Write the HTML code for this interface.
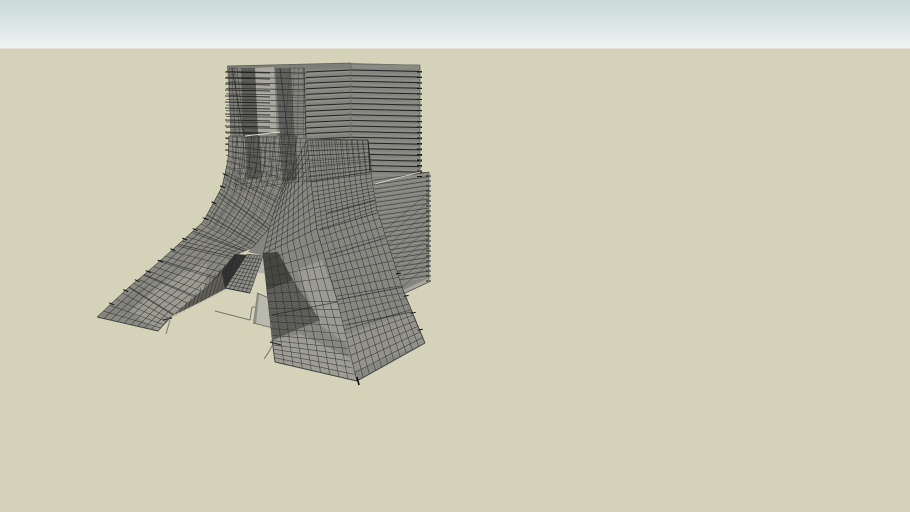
<!DOCTYPE html>
<html lang="en">
<head>
<meta charset="utf-8">
<title>3D model</title>
<style>
html,body{margin:0;padding:0;width:910px;height:512px;overflow:hidden;background:#d4d2b9}
svg{display:block;position:absolute;left:0;top:0}
</style>
</head>
<body>
<svg id="s" width="910" height="512" viewBox="0 0 910 512" xmlns="http://www.w3.org/2000/svg">
<defs>
<linearGradient id="sky" x1="0" y1="0" x2="0" y2="1">
<stop offset="0" stop-color="#cbdbdb"/>
<stop offset=".45" stop-color="#d8e3e2"/>
<stop offset="1" stop-color="#f0f4f4"/>
</linearGradient>
<filter id="b" x="-5%" y="-5%" width="110%" height="110%"><feGaussianBlur stdDeviation="0.35"/></filter>
</defs>
<rect width="910" height="48" fill="url(#sky)"/>
<rect y="48" width="910" height="1.5" fill="#e2e0d0"/>
<rect y="49" width="910" height="463" fill="#d4d2b9"/>
<g id="m" filter="url(#b)"></g>
</svg>
<script>
var m=document.getElementById('m'),NS='http://www.w3.org/2000/svg';
function el(n,a){var e=document.createElementNS(NS,n);for(var k in a)e.setAttribute(k,a[k]);m.appendChild(e);return e}
function poly(p,f,o){el('polygon',{points:p.map(function(q){return q.join(',')}).join(' '),fill:f,'fill-opacity':o==null?1:o})}
function line(a,b,c,w,o){el('line',{x1:a[0],y1:a[1],x2:b[0],y2:b[1],stroke:c||'#333',"stroke-width":w||.7,"stroke-opacity":o==null?1:o})}
function at(r,t){var n=r.length-1,x=Math.min(t*n,n-.0001),i=Math.floor(x),f=x-i;return[r[i][0]+(r[i+1][0]-r[i][0])*f,r[i][1]+(r[i+1][1]-r[i][1])*f]}
function mix(a,b,t){return[a[0]+(b[0]-a[0])*t,a[1]+(b[1]-a[1])*t]}
function surf(L,R,nAlong,nAcross,c,w,o){
 var i,j,S=40,p;
 for(i=0;i<=nAlong;i++){line(at(L,i/nAlong),at(R,i/nAlong),c,w,o)}
 for(j=0;j<=nAcross;j++){p=[];for(i=0;i<=S;i++){var q=mix(at(L,i/S),at(R,i/S),j/nAcross);p.push(q.join(','))}
  el('polyline',{points:p.join(' '),fill:'none',stroke:c,"stroke-width":w,"stroke-opacity":o})}
}
function fillSurf(L,R,f,o){poly(L.concat(R.slice().reverse()),f,o)}

/* ground bits */
line([215,311],[250,320],'#77776a',1);
line([250,320],[252,307],'#77776a',1);
line([252,307],[258,307],'#77776a',1);
poly([[257,293],[253,323],[273,328],[274,300]],'#b9b9ae');
poly([[257,293],[253,323],[256,324],[259,294]],'#8f8f86');
line([257,293],[274,300],'#666',.7);
line([253,323],[273,328],'#666',.7);
poly([[403,288],[429,276],[428,282],[403,294]],'#a6a69c');
line([403,294],[429,282],'#55554e',.8);

/* back tower */
poly([[227,66],[351,63],[420,65],[420,172],[429,172],[429,278],[403,290],[360,240],[300,140],[232,150]],'#85857f');
poly([[227,66],[351,63],[351,68],[227,71]],'#7e7e78');
poly([[351,63],[420,65],[420,69],[351,68]],'#8b8b85');
poly([[255,68],[274,67],[277,136],[258,139]],'#a9a9a1');
poly([[241,68],[255,68],[260,178],[245,180]],'#5b5b57');
poly([[275,68],[291,68],[297,180],[283,182]],'#5f5f5b');

var i,y,t,a;
/* tower stripes */
for(i=0;i<19;i++){y=72+i*5.6;
 line([307,y+2],[352,y-1],'#a6a69e',1.4,.35);
 line([352,y+2],[420,y+3],'#a6a69e',1.4,.3);
 line([226,y-.5],[306,y+1],'#222',.8,.75);
 line([306,y],[352,y-2],'#111',1,.85);
 line([352,y-2],[422,y-.5],'#111',1,.85);
}
for(i=0;i<24;i++){y=176+i*4.5;
 line([362,y+6],[429,y-4],'#2f2f2c',.8,.7);
 line([362,y+8],[429,y-2],'#aaa9a1',.9,.35);
}
for(i=0;i<9;i++){y=200+i*9;line([385,y+30],[429,y-8],'#3a3a36',.6,.55)}
for(i=0;i<20;i++){line([422,72+i*5.5],[417,72+i*5.5],'#111',1)}
for(i=0;i<22;i++){line([426,176+i*5],[431,176+i*5],'#111',.9)}
line([375,184],[420,172],'#d8d8cc',.9);
line([351,63],[351,170],'#6c6c66',.7);
line([420,65],[420,172],'#5d5d57',.8);
line([429,172],[429,282],'#5d5d57',.8);
line([227,66],[351,63],'#5f5f5a',.8);
line([351,64],[420,65],'#6a6a64',.7);
surf([[229,68],[231,150]],[[237,68],[246,150]],12,3,'#333',.6,.65);
surf([[290,68],[283,150]],[[303,68],[304,150]],14,3,'#3a3a38',.6,.55);
for(i=0;i<14;i++){y=72+i*6;line([225,y],[270,y+1],'#111',.9,.8)}
line([232,68],[244,136],'#333',.8);
line([280,68],[288,136],'#333',.8);
line([304,68],[306,140],'#333',.8);

/* closing backdrop behind the legs */
poly([[229,136],[368,140],[377,210],[403,290],[357,300],[264,256],[248,252],[272,225]],'#858580');

/* left leg */
var LL=[[229,136],[228,160],[222,187],[203,222],[180,243],[152,268],[128,288],[97,317]],
    LR=[[297,136],[292,180],[272,225],[252,248],[235,255],[207,287],[172,316],[158,331]];
fillSurf(LL,LR,'#888882',.98);
poly([[130,312],[165,282],[207,262],[205,288],[172,316],[158,331]],'#a2a299',.7);
poly([[97,317],[150,282],[128,312]],'#80807a',.6);
surf(LL,LR,34,9,'#2c2c2a',.6,.75);
surf(LL.slice(0,4),LR.slice(0,4),14,16,'#2c2c2a',.5,.5);
for(i=0;i<8;i++){t=.22+i*.09;line(at(LL,t),at(LR,t),'#1a1a18',1,.5)}

/* central strip */
poly([[262,256],[267,256],[266,274],[255,272]],'#b3b3a8');
var CL=[[247,254],[225,288]],CR=[[263,256],[250,293]];
fillSurf(CL,CR,'#8d8d87');
surf(CL,CR,10,6,'#2c2c2a',.6,.8);
line([225,288],[250,293],'#333',1);

/* dark inner leg panel */
poly([[172,317],[207,287],[235,254],[247,255],[225,289]],'#46463f');
poly([[172,317],[207,287],[222,272],[225,289]],'#5e5e58');
poly([[222,272],[235,254],[247,255],[225,289]],'#333331');
for(i=0;i<14;i++){t=i/13;line(mix([172,317],[235,254],t),mix([172,318],[225,289],t),'#1d1d1b',.5,.7)}
line([171,317],[226,290],'#c8c7b0',.8);
line([163,320],[172,318],'#333',1.2);
el('path',{d:'M170 320 Q168 327 166 334',fill:'none',stroke:'#77776c','stroke-width':1});

/* right leg, left face */
var AL=[[283,186],[270,225],[263,255],[268,300],[272,338],[275,362]],
    AR=[[307,140],[312,190],[317,230],[337,300],[350,345],[357,381]];
fillSurf(AL,AR,'#878782',.98);
poly([[272,340],[300,334],[350,358],[357,381],[275,362]],'#9d9d95');
poly([[297,270],[322,260],[337,300],[348,345],[320,325]],'#a0a098',.8);
poly([[263,253],[278,252],[293,280],[320,320],[273,340],[267,290]],'#63635e',.92);
poly([[263,253],[278,252],[293,280],[267,290]],'#444440',.9);
surf(AL,AR,28,9,'#2a2a28',.6,.75);
for(i=0;i<26;i++){t=i/25;line(mix([266,290],[273,338],t),mix([293,280],[320,320],t),'#1d1d1b',.4,.55)}

/* right leg, right face */
var BL=[[307,140],[312,190],[317,230],[337,300],[357,381]],
    BR=[[368,140],[372,180],[377,210],[403,290],[425,343]];
fillSurf(BL,BR,'#878782',.98);
poly([[352,372],[345,335],[410,312],[425,343]],'#96968e',.8);
surf(BL,BR,38,11,'#2a2a28',.6,.75);

/* dense mesh at the waist */
surf([[232,137],[236,190]],[[368,140],[372,172]],10,26,'#1e1e1c',.55,.5);

/* dark strips showing through */
poly([[245,136],[260,136],[262,178],[247,180]],'#2e2e2c',.45);
poly([[280,136],[296,136],[297,180],[283,182]],'#2e2e2c',.45);

line([307,140],[368,140],'#333',.8);
line([368,140],[370,172],'#222',.9);
line([357,381],[425,343],'#444',.9);
line([275,362],[357,381],'#444',.9);
line([425,343],[403,290],'#444',.9);
line([275,362],[272,340],'#444',.9);
line([97,317],[158,331],'#444',.9);
line([158,331],[171,316],'#555',.8);
line([245,136],[280,132],'#deded2',.9);

/* bold bands */
[[[307,182],[370,172]],[[327,213],[375,200]],[[320,230],[377,213]],[[330,255],[385,238]],[[337,300],[403,287]],[[272,315],[337,302]],[[345,325],[412,312]]].forEach(function(l){line(l[0],l[1],'#111',1.1,.5)});
for(i=0;i<12;i++){a=at(LL,.22+i*.065);line([a[0]-2,a[1]-1],[a[0]+3,a[1]+1],'#111',1)}
for(i=0;i<4;i++){a=at(BR,.7+i*.08);line([a[0]-2,a[1]],[a[0]+3,a[1]-1],'#111',1)}
line([357,377],[359,385],'#111',1.6);
line([270,342],[281,345],'#333',1.3);
el('path',{d:'M272 346 Q269 352 264 359',fill:'none',stroke:'#77776c','stroke-width':1});
</script>
</body>
</html>
